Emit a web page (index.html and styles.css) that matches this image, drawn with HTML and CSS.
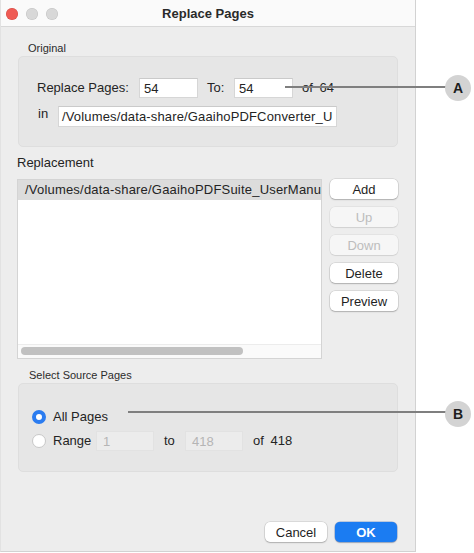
FILE: index.html
```html
<!DOCTYPE html>
<html lang="en">
<head>
<meta charset="utf-8">
<title>Replace Pages</title>
<link rel="stylesheet" href="styles.css">
</head>
<body>
<div class="stage">
  <div class="window">
    <header class="titlebar">
      <div class="lights">
        <span class="light close"></span>
        <span class="light"></span>
        <span class="light"></span>
      </div>
      <div class="title">Replace Pages</div>
      <div></div>
    </header>

    <main class="content">
      <div class="group-label">Original</div>
      <section class="group original">
        <div class="row">
          <span class="lbl lbl-replace">Replace Pages:</span>
          <span class="field num">54</span>
          <span class="lbl lbl-to">To:</span>
          <span class="field num">54</span>
          <span class="lbl lbl-of">of 64</span>
        </div>
        <div class="row row-path">
          <span class="lbl lbl-in">in</span>
          <span class="field path">/Volumes/data-share/GaaihoPDFConverter_U</span>
        </div>
      </section>

      <div class="section-label">Replacement</div>
      <section class="replacement">
        <div class="list">
          <div class="list-rows">
            <div class="list-row selected">/Volumes/data-share/GaaihoPDFSuite_UserManu</div>
          </div>
          <div class="hscroll"><span class="thumb"></span></div>
        </div>
        <div class="side-buttons">
          <button class="btn">Add</button>
          <button class="btn" disabled>Up</button>
          <button class="btn" disabled>Down</button>
          <button class="btn">Delete</button>
          <button class="btn">Preview</button>
        </div>
      </section>

      <div class="group-label source-label">Select Source Pages</div>
      <section class="group source">
        <div class="radio-row">
          <span class="radio checked"></span>
          <span class="lbl">All Pages</span>
        </div>
        <div class="radio-row range-row">
          <span class="radio"></span>
          <span class="lbl lbl-range">Range</span>
          <span class="field num off">1</span>
          <span class="lbl lbl-to2">to</span>
          <span class="field num off">418</span>
          <span class="lbl lbl-of2">of 418</span>
        </div>
      </section>

      <footer class="footer">
        <button class="btn">Cancel</button>
        <button class="btn primary">OK</button>
      </footer>
    </main>
  </div>

  <!-- callouts pointing at the dialog -->
  <div class="leader leader-a"></div>
  <div class="callout callout-a">A</div>
  <div class="leader leader-b"></div>
  <div class="callout callout-b">B</div>
</div>
</body>
</html>
```

FILE: styles.css
```css
* { box-sizing: border-box; }

html, body {
  margin: 0;
  padding: 0;
  background: #ffffff;
}

body {
  font-family: "Liberation Sans", Arial, sans-serif;
  color: #242424;
  font-size: 13px;
}

.stage {
  position: relative;
  width: 474px;
  height: 553px;
}

/* dialog window */
.window {
  width: 416px;
  height: 552px;
  background: #ededed;
  border-right: 1px solid #d2d2d2;
  border-bottom: 1px solid #d2d2d2;
  border-left: 1px solid #e2e2e2;
  display: flex;
  flex-direction: column;
}

.titlebar {
  height: 27px;
  flex: none;
  background: #fafafa;
  border-bottom: 1px solid #d8d8d8;
  display: grid;
  grid-template-columns: 1fr auto 1fr;
  align-items: center;
}

.lights {
  display: flex;
  gap: 8px;
  padding-left: 5px;
  padding-top: 1px;
}

.light {
  width: 12px;
  height: 12px;
  border-radius: 50%;
  background: #d8d8d8;
  box-shadow: inset 0 0 0 0.5px rgba(0, 0, 0, 0.12);
}

.light.close {
  background: #ef5b54;
  box-shadow: inset 0 0 0 0.5px rgba(160, 30, 20, 0.35);
}

.title {
  font-weight: bold;
  font-size: 13px;
  color: #2a2a2a;
  padding-top: 1px;
}

.content {
  flex: 1;
  display: flex;
  flex-direction: column;
  padding: 0 17px 0 16px;
}

/* small caption above a group box */
.group-label {
  font-size: 11px;
  line-height: 14px;
  margin: 14px 0 1px 11px;
  color: #2b2b2b;
}

.group {
  margin-left: 1px;
  width: 380px;
  background: #e6e6e6;
  border: 1px solid #dedede;
  border-radius: 5px;
}

.row {
  display: flex;
  align-items: center;
}

.lbl {
  white-space: nowrap;
  line-height: 16px;
}

.field {
  display: block;
  height: 20px;
  line-height: 19px;
  background: #ffffff;
  border: 1px solid #d6d6d6;
  border-top-color: #cacaca;
  padding: 0 4px;
  white-space: nowrap;
  overflow: hidden;
  font-size: 13px;
}

.field.num { width: 59px; }

/* Original group */
.original {
  height: 91px;
  padding: 21px 0 0 18px;
}

.lbl-replace { width: 102px; }
.lbl-to { width: 36px; padding-left: 9px; }
.lbl-of { padding-left: 9px; word-spacing: 3px; }

.row-path { margin-top: 8px; }
.row-path .lbl-in { width: 21px; padding-left: 1px; margin-top: -6px; }
.field.path {
  width: 279px;
  height: 21px;
  line-height: 20px;
  padding-left: 3px;
  letter-spacing: 0.15px;
}

/* Replacement list */
.section-label {
  font-size: 13px;
  line-height: 16px;
  margin-top: 8px;
  color: #242424;
}

.replacement {
  margin-top: 8px;
  display: flex;
  gap: 8px;
}

.list {
  width: 305px;
  height: 180px;
  background: #ffffff;
  border: 1px solid #d4d4d4;
  display: flex;
  flex-direction: column;
}

.list-rows { flex: 1; overflow: hidden; }

.list-row {
  height: 20px;
  line-height: 20px;
  padding-left: 7px;
  white-space: nowrap;
  letter-spacing: 0.2px;
}

.list-row.selected { background: #dcdcdc; }

.hscroll {
  height: 14px;
  flex: none;
  background: #fafafa;
  border-top: 1px solid #ececec;
  padding: 2px 3px 0;
}

.thumb {
  display: block;
  width: 222px;
  height: 8px;
  border-radius: 4px;
  background: #c1c1c1;
}

.side-buttons {
  display: flex;
  flex-direction: column;
  gap: 8px;
}

.btn {
  font-family: inherit;
  font-size: 13px;
  color: #1f1f1f;
  height: 20px;
  width: 68px;
  padding: 0;
  background: #ffffff;
  border: none;
  border-radius: 5px;
  box-shadow: 0 0 0 0.5px rgba(0, 0, 0, 0.16), 0 1px 1.5px rgba(0, 0, 0, 0.2);
}

.btn:disabled {
  background: #f6f6f6;
  color: #bdbdbd;
  box-shadow: 0 0 0 0.5px rgba(0, 0, 0, 0.08), 0 1px 1px rgba(0, 0, 0, 0.08);
}

/* Select Source Pages group */
.source-label { margin: 9px 0 1px 12px; }

.source {
  height: 89px;
  padding: 25px 0 0 13px;
}

.radio-row {
  display: flex;
  align-items: center;
  gap: 7px;
  height: 16px;
}

.radio {
  width: 14px;
  height: 14px;
  border-radius: 50%;
  background: #ffffff;
  border: 1px solid #c8c8c8;
  flex: none;
}

/* selected radio: blue ring with a white centre dot */
.radio.checked {
  background: #ffffff;
  border: 4px solid #2b7cf0;
}

.range-row {
  margin-top: 6px;
  height: 20px;
}

.lbl-range { width: 36px; }
.field.off {
  width: 58px;
  background: #ececec;
  border-color: #e2e2e2;
  color: #b5b5b5;
  padding-left: 6px;
}
.lbl-to2 { width: 17px; padding-left: 3px; }
.lbl-of2 { padding-left: 3px; word-spacing: 3px; }

/* dialog buttons */
.footer {
  margin-top: auto;
  display: flex;
  justify-content: flex-end;
  gap: 8px;
  padding: 0 1px 9px 0;
}

.footer .btn { width: 62px; }

.btn.primary {
  background: #1b7cf2;
  color: #ffffff;
  font-weight: bold;
  box-shadow: 0 0 0 0.5px rgba(0, 60, 160, 0.4), 0 1px 1.5px rgba(0, 0, 0, 0.2);
}

/* callout annotations */
.leader {
  position: absolute;
  height: 2px;
  background: #7f7f7f;
}

.leader-a { left: 285px; width: 162px; top: 86px; }
.leader-b { left: 128px; width: 319px; top: 411px; }

.callout {
  position: absolute;
  width: 26px;
  height: 26px;
  border-radius: 50%;
  background: #d3d3d3;
  color: #1e1e1e;
  font-weight: bold;
  font-size: 14px;
  line-height: 26px;
  text-align: center;
}

.callout-a { left: 445px; top: 75px; }
.callout-b { left: 445px; top: 401px; }
```
